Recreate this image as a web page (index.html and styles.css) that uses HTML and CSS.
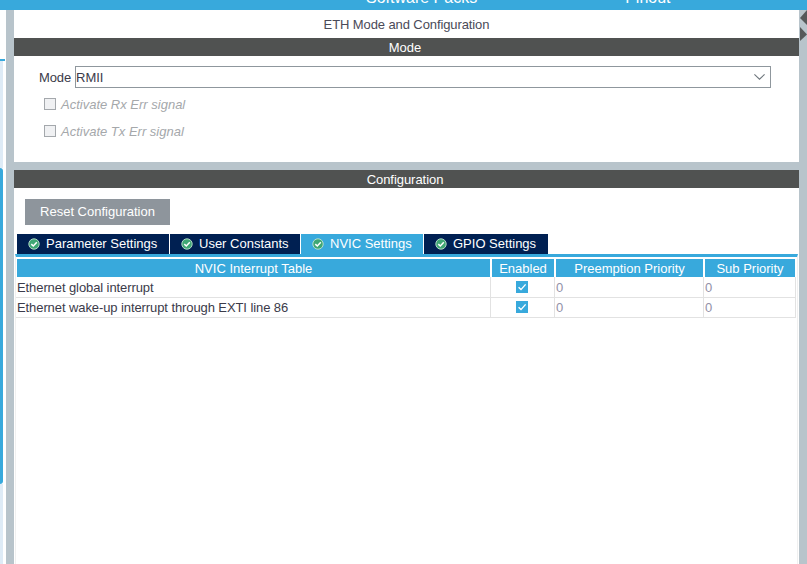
FILE: index.html
```html
<!DOCTYPE html>
<html lang="en">
<head>
<meta charset="utf-8">
<title>ETH Mode and Configuration</title>
<link rel="stylesheet" href="styles.css">
</head>
<body>
<header class="topbar">
  <span class="top-software">Software Packs</span>
  <span class="top-pinout">Pinout</span>
</header>
<div class="main">
  <aside class="rail">
    <div class="rail-track">
      <div class="rail-gap"></div>
      <div class="rail-line"></div>
      <div class="rail-pane rail-pane-a"></div>
      <div class="rail-pane rail-blue"></div>
      <div class="rail-pane rail-pane-b"></div>
    </div>
    <div class="splitter"></div>
  </aside>
  <main class="content">
    <section class="mode-panel">
      <h1 class="page-title">ETH Mode and Configuration</h1>
      <h2 class="band">Mode</h2>
      <div class="mode-row">
        <span class="mode-label">Mode</span>
        <div class="select">
          <span>RMII</span>
          <svg class="chevron" width="11" height="6" viewBox="0 0 11 6"><path d="M.4.4 5.5 5.2 10.6.4" fill="none" stroke="#6f777d" stroke-width="1.1"/></svg>
        </div>
      </div>
      <label class="check-row first"><span class="checkbox"></span>Activate Rx Err signal</label>
      <label class="check-row"><span class="checkbox"></span>Activate Tx Err signal</label>
    </section>
    <section class="config-panel">
      <h2 class="band">Configuration</h2>
      <button class="reset">Reset Configuration</button>
      <nav class="tabs">
        <div class="tab tab-1"><svg class="ok" viewBox="0 0 12 12"><circle cx="6" cy="6" r="5.2" fill="#3fa774" stroke="#bfe3cf" stroke-width=".9"/><path d="M3.3 6.1 5.3 8 8.8 4.3" fill="none" stroke="#fff" stroke-width="1.5"/></svg>Parameter Settings</div>
        <div class="tab tab-2"><svg class="ok" viewBox="0 0 12 12"><circle cx="6" cy="6" r="5.2" fill="#3fa774" stroke="#bfe3cf" stroke-width=".9"/><path d="M3.3 6.1 5.3 8 8.8 4.3" fill="none" stroke="#fff" stroke-width="1.5"/></svg>User Constants</div>
        <div class="tab tab-3 active"><svg class="ok" viewBox="0 0 12 12"><circle cx="6" cy="6" r="5.2" fill="#3fa774" stroke="#bfe3cf" stroke-width=".9"/><path d="M3.3 6.1 5.3 8 8.8 4.3" fill="none" stroke="#fff" stroke-width="1.5"/></svg>NVIC Settings</div>
        <div class="tab tab-4"><svg class="ok" viewBox="0 0 12 12"><circle cx="6" cy="6" r="5.2" fill="#3fa774" stroke="#bfe3cf" stroke-width=".9"/><path d="M3.3 6.1 5.3 8 8.8 4.3" fill="none" stroke="#fff" stroke-width="1.5"/></svg>GPIO Settings</div>
      </nav>
      <div class="table-box">
        <table class="nvic">
          <colgroup>
            <col class="c-name"><col class="c-enabled"><col class="c-pre"><col class="c-sub">
          </colgroup>
          <thead>
            <tr><th>NVIC Interrupt Table</th><th>Enabled</th><th>Preemption Priority</th><th>Sub Priority</th></tr>
          </thead>
          <tbody>
            <tr class="row-first">
              <td>Ethernet global interrupt</td>
              <td class="center"><span class="tick"><svg width="12" height="12" viewBox="0 0 12 12"><path d="M2.6 6.2 5 8.6 9.6 3.4" fill="none" stroke="#fff" stroke-width="1.4"/></svg></span></td>
              <td class="num">0</td><td class="num">0</td>
            </tr>
            <tr class="row-second">
              <td>Ethernet wake-up interrupt through EXTI line 86</td>
              <td class="center"><span class="tick"><svg width="12" height="12" viewBox="0 0 12 12"><path d="M2.6 6.2 5 8.6 9.6 3.4" fill="none" stroke="#fff" stroke-width="1.4"/></svg></span></td>
              <td class="num">0</td><td class="num">0</td>
            </tr>
          </tbody>
        </table>
      </div>
    </section>
  </main>
  <aside class="right-split">
    <svg class="arrows" width="8" height="32" viewBox="0 0 8 32"><path d="M8 0 1 8 8 15Z" fill="#56595a"/><path d="M1 17 8 24.5 1 31Z" fill="#56595a"/></svg>
  </aside>
</div>
</body>
</html>
```
FILE: styles.css
```css
* { box-sizing: border-box; }
html, body { margin: 0; height: 100%; }
body {
  width: 807px;
  height: 564px;
  overflow: hidden;
  display: flex;
  flex-direction: column;
  background: #fff;
  font-family: "Liberation Sans", Arial, sans-serif;
  font-size: 13px;
  color: #3b3b4a;
}
.topbar {
  height: 10px;
  flex: none;
  background: #38a9dc;
  color: #fff;
  font-size: 16px;
  display: flex;
  align-items: flex-end;
  overflow: hidden;
  padding-left: 366px;
}
.topbar span { line-height: 18px; flex: none; margin-bottom: 3px; }
.top-pinout { margin-left: 148px; }
.main { flex: 1; min-height: 0; display: flex; }
.rail { width: 14px; flex: none; display: flex; }
.rail-track { width: 6px; display: flex; flex-direction: column; }
.rail-gap { height: 49px; flex: none; }
.rail-line { height: 2px; width: 5px; flex: none; background: #38a9dc; }
.rail-pane { width: 3px; background: #deebf6; }
.rail-pane-a { height: 107px; flex: none; }
.rail-blue { height: 316px; flex: none; background: #38a9dc; border-radius: 0 3px 3px 0; }
.rail-pane-b { flex: 1; }
.splitter { width: 8px; background: #b8c4cb; }
.content { flex: 1; min-width: 0; display: flex; flex-direction: column; background: #b8c4cb; }
.page-title {
  margin: 0;
  height: 28px;
  line-height: 30px;
  text-align: center;
  font-weight: 400;
  font-size: 13px;
  letter-spacing: -.1px;
  color: #4a4a58;
}
.band {
  margin: 0;
  height: 18px;
  line-height: 19px;
  padding-right: 3px;
  background: #505251;
  color: #fff;
  text-align: center;
  font-weight: 400;
  font-size: 13px;
  letter-spacing: -.05px;
}
.mode-panel { height: 152px; flex: none; background: #fff; }
.mode-row { display: flex; align-items: center; margin-top: 10px; height: 22px; padding-left: 25px; }
.mode-label { width: 36px; flex: none; letter-spacing: -.1px; }
.select {
  width: 696px;
  height: 22px;
  border: 1px solid #8f979d;
  display: flex;
  align-items: center;
  justify-content: space-between;
  padding: 0 5px 0 0;
}
.check-row {
  display: flex;
  align-items: center;
  height: 12px;
  margin: 15px 0 0 30px;
  color: #a5a8ab;
  font-style: italic;
}
.check-row.first { margin-top: 10px; }
.checkbox {
  width: 12px;
  height: 12px;
  flex: none;
  margin-right: 5px;
  background: #f0f1f3;
  border: 1px solid #a4a8ac;
}
.config-panel { flex: 1; margin-top: 8px; background: #fff; display: flex; flex-direction: column; min-height: 0; }
.reset {
  width: 145px;
  height: 26px;
  margin: 11px 0 0 11px;
  flex: none;
  border: 0;
  padding: 0 0 2px;
  background: #8e959c;
  color: #fff;
  font: inherit;
}
.tabs { display: flex; gap: 1px; margin: 9px 0 0 3px; height: 20px; flex: none; }
.tab {
  display: flex;
  align-items: center;
  background: #002052;
  color: #fff;
  padding: 0 0 1px 11px;
  white-space: nowrap;
}
.tab.active { background: #38a9dc; }
.tab-1 { width: 152px; }
.tab-2 { width: 130px; }
.tab-3 { width: 122px; }
.tab-4 { width: 124px; }
.ok { width: 12px; height: 12px; margin-right: 6px; flex: none; }
.table-box {
  flex: 1;
  margin-left: 1px;
  width: 783px;
  border-top: 3px solid #38a9dc;
  border-left: 1px solid #f0f0f0;
  border-right: 1px solid #f0f0f0;
  padding-top: 2px;
}
.nvic { border-collapse: separate; border-spacing: 0; table-layout: fixed; width: 780px; }
.c-name { width: 475px; }
.c-enabled { width: 64px; }
.c-pre { width: 149px; }
.c-sub { width: 92px; }
.nvic th {
  height: 18px;
  padding: 1px 0 0;
  background: #38a9dc;
  color: #fff;
  font-weight: 400;
  border-left: 1px solid #fff;
  border-right: 1px solid #fff;
}
.nvic td {
  height: 20px;
  padding: 1px 0 0 1px;
  letter-spacing: -.09px;
  border-right: 1px solid #e2e2e2;
  border-bottom: 1px solid #e2e2e2;
}
.row-first td { height: 21px; }
.row-second td { padding-top: 0; }
.nvic td.center { text-align: center; padding: 0 2px 3px 0; }
.nvic td.num { color: #9291a8; }
.tick { display: inline-flex; width: 12px; height: 12px; background: #38a9dc; vertical-align: middle; }
.right-split { width: 8px; flex: none; background: #b8c4cb; overflow: hidden; }
.arrows { display: block; }
```
